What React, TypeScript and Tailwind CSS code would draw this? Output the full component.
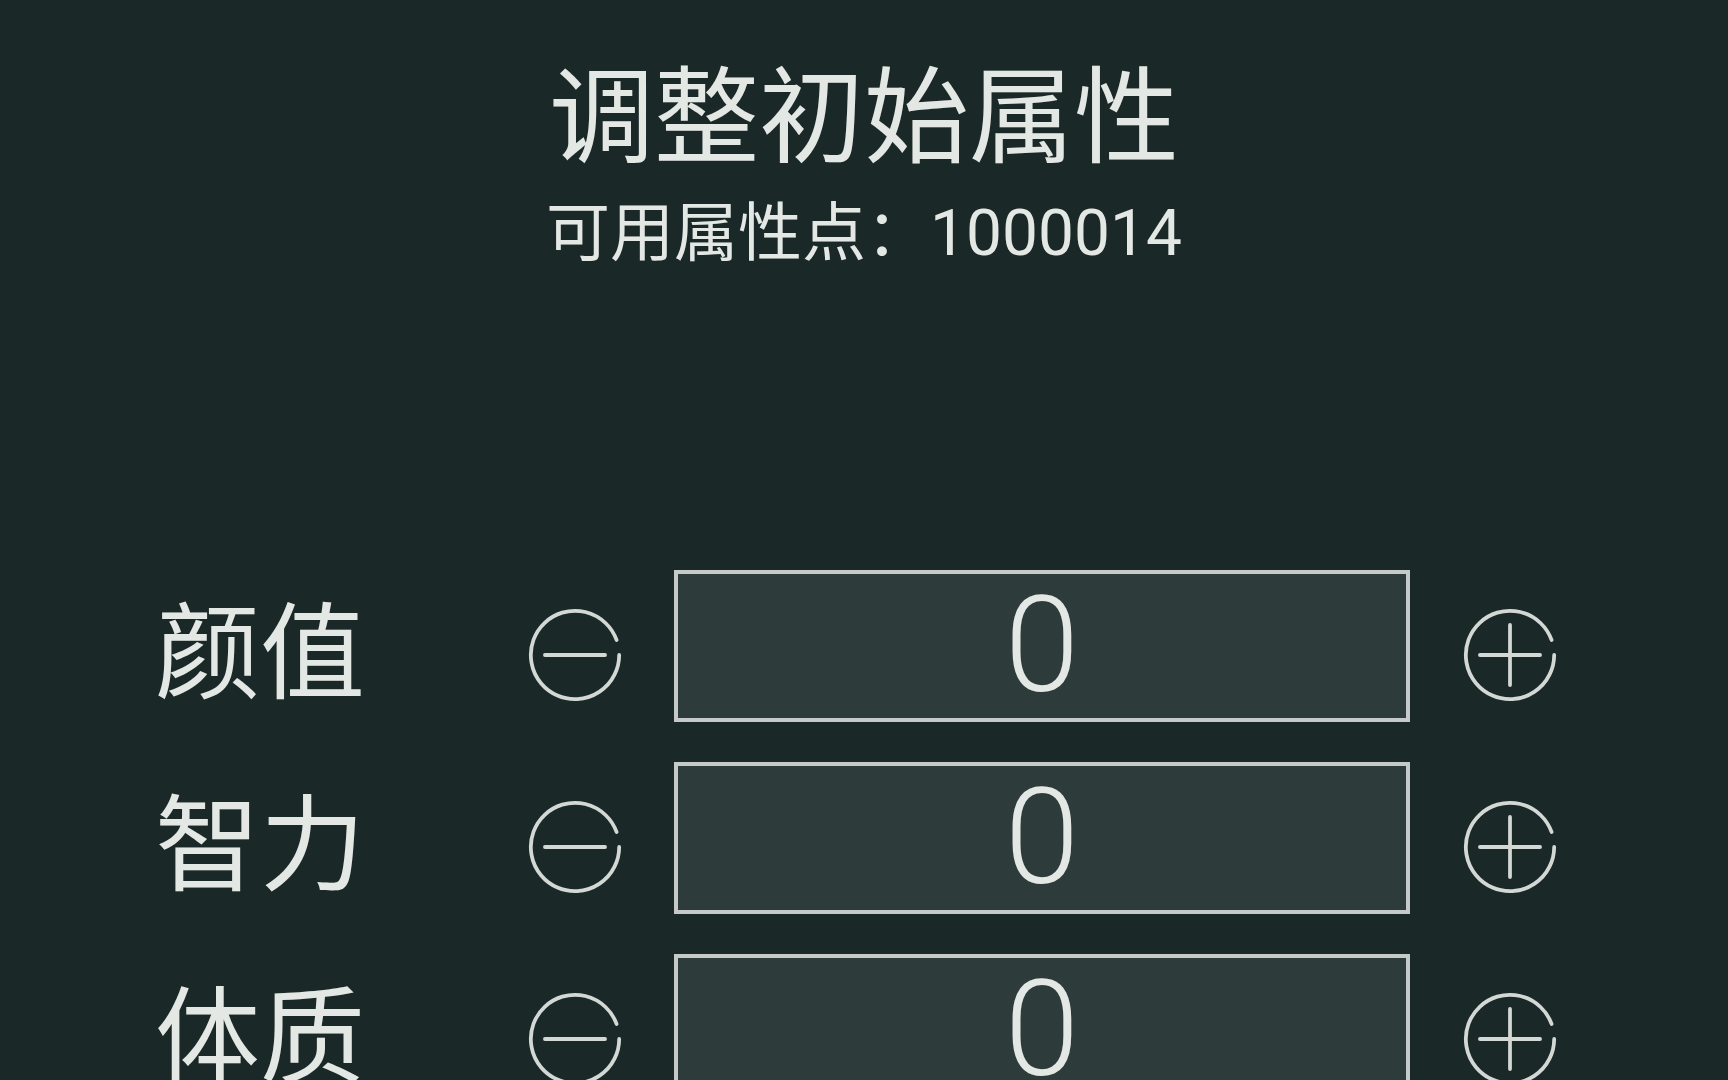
import React from 'react';

const rows = [
  { label: '颜值', value: 0 },
  { label: '智力', value: 0 },
  { label: '体质', value: 0 },
];

const RoundButton = ({ kind }: { kind: 'minus' | 'plus' }) => (
  <svg viewBox="0 0 100 100" className="w-[94px] h-[94px] mt-[18px] shrink-0" fill="none" stroke="#d3d8d5" strokeWidth="4" strokeLinecap="round">
    <path d="M97 50 A47 47 0 1 1 94.2 34" />
    <path d="M18 50 H82" />
    {kind === 'plus' && <path d="M50 18 V82" />}
  </svg>
);

const App = () => {
  return (
    <div
      className="w-[1728px] h-[1080px] overflow-hidden bg-[#1b2828] text-[#e4e8e5]"
      style={{ fontFamily: 'Roboto, "Noto Sans CJK SC", sans-serif' }}
    >
      <div className="flex flex-col items-center pt-[66px]">
        <h1 className="text-[105px] leading-none font-normal">调整初始属性</h1>
        <p className="mt-[31px] text-[64px] leading-none">可用属性点：1000014</p>
      </div>

      <div className="mt-[304px] flex flex-col gap-[40px] pl-[155px]">
        {rows.map((row) => (
          <div key={row.label} className="flex items-center h-[152px]">
            <span className="w-[373px] text-[105px] leading-none mt-[16px]">{row.label}</span>
            <RoundButton kind="minus" />
            <div className="ml-[52px] w-[736px] h-[152px] border-4 border-[#c5cac8] bg-[#2e3b3b] flex items-center justify-center">
              <span className="text-[134px] leading-none font-light">{row.value}</span>
            </div>
            <div className="ml-[53px]">
              <RoundButton kind="plus" />
            </div>
          </div>
        ))}
      </div>
    </div>
  );
};

export default App;
